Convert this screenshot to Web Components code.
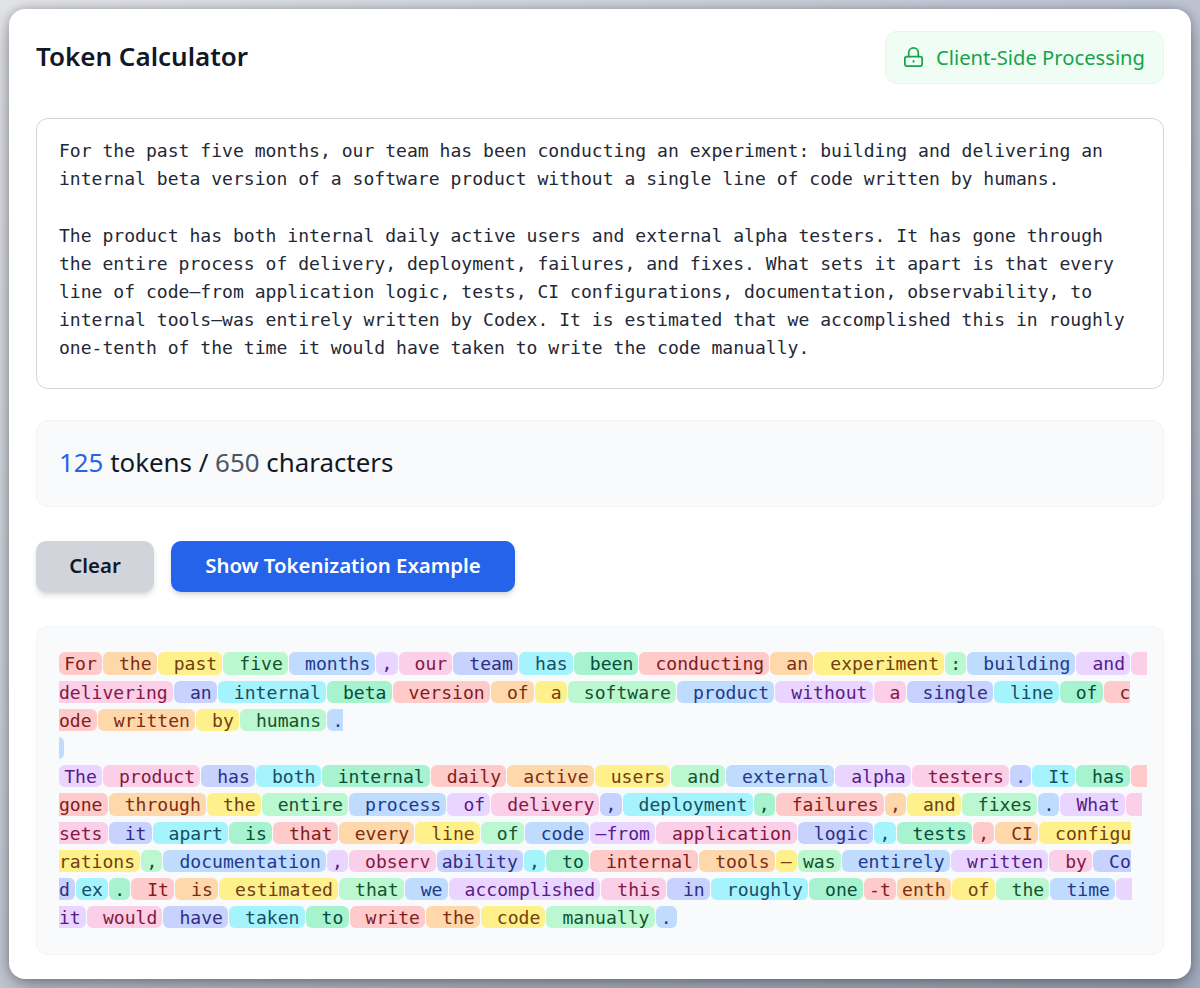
<!DOCTYPE html>
<html lang="en">
<head>
<meta charset="UTF-8">
<title>Token Calculator</title>
<style>
  html, body { margin: 0; height: 100%; }
  body {
    box-sizing: border-box;
    padding: 9px;
    overflow: hidden;
    font-family: "Noto Sans", sans-serif;
    background: linear-gradient(135deg, #e2e4e7 0%, #c0c6d4 50%, #a3aebf 100%);
  }
</style>
</head>
<body>
<calc-card>
  <calc-header slot="header">
    Token Calculator
    <status-pill slot="badge">Client-Side Processing</status-pill>
  </calc-header>
  <text-panel>For the past five months, our team has been conducting an experiment: building and delivering an internal beta version of a software product without a single line of code written by humans.

The product has both internal daily active users and external alpha testers. It has gone through the entire process of delivery, deployment, failures, and fixes. What sets it apart is that every line of code—from application logic, tests, CI configurations, documentation, observability, to internal tools—was entirely written by Codex. It is estimated that we accomplished this in roughly one-tenth of the time it would have taken to write the code manually.</text-panel>
  <stat-bar tokens="125" chars="650"></stat-bar>
  <button-row>
    <action-button kind="plain">Clear</action-button>
    <action-button kind="primary">Show Tokenization Example</action-button>
  </button-row>
  <token-view></token-view>
</calc-card>

<script>
  class CalcCard extends HTMLElement {
    constructor() {
      super();
      this.attachShadow({ mode: 'open' }).innerHTML = `
        <style>
          :host {
            display: flex;
            flex-direction: column;
            box-sizing: border-box;
            height: 970px;
            padding: 22px 27px 24px;
            background: #fff;
            border-radius: 16px;
            box-shadow: 0 10px 25px -3px rgba(0, 0, 0, .35), 0 0 10px rgba(0, 0, 0, .24);
            color: #111827;
          }
        </style>
        <slot name="header"></slot>
        <slot></slot>`;
    }
  }

  class CalcHeader extends HTMLElement {
    constructor() {
      super();
      this.attachShadow({ mode: 'open' }).innerHTML = `
        <style>
          :host {
            display: flex;
            justify-content: space-between;
            align-items: center;
            margin-bottom: 34px;
            font-size: 26px;
            font-weight: 600;
            color: #111827;
          }
          span { padding-bottom: 3px; }
        </style>
        <span><slot></slot></span>
        <slot name="badge"></slot>`;
    }
  }

  class StatusPill extends HTMLElement {
    constructor() {
      super();
      this.attachShadow({ mode: 'open' }).innerHTML = `
        <style>
          :host {
            display: flex;
            align-items: center;
            gap: 11px;
            box-sizing: border-box;
            height: 53px;
            padding: 0 18px 2px 16px;
            background: #f0fdf4;
            border: 1px solid #dcfce7;
            border-radius: 12px;
            font-size: 20.2px;
            font-weight: 400;
            color: #16a34a;
          }
          svg { width: 23px; height: 23px; flex: none; margin-top: 2px; }
        </style>
        <svg viewBox="0 0 24 24" fill="none" stroke="currentColor" stroke-width="1.8" stroke-linecap="round" stroke-linejoin="round">
          <rect x="3" y="11" width="18" height="10" rx="2"></rect>
          <path d="M7 11V7a5 5 0 0 1 10 0v4"></path>
          <path d="M12 15.5v1"></path>
        </svg>
        <slot></slot>`;
    }
  }

  class TextPanel extends HTMLElement {
    constructor() {
      super();
      this.attachShadow({ mode: 'open' }).innerHTML = `
        <style>
          :host {
            display: block;
            box-sizing: border-box;
            height: 271px;
            padding: 18px 22px 0;
            margin-bottom: 31px;
            border: 1px solid #d1d5db;
            border-radius: 12px;
            background: #fff;
          }
          div {
            font: 18.07px/28.2px "DejaVu Sans Mono", monospace;
            color: #1f2937;
            white-space: pre-wrap;
          }
        </style>
        <div><slot></slot></div>`;
    }
  }

  class StatBar extends HTMLElement {
    constructor() {
      super();
      this.attachShadow({ mode: 'open' }).innerHTML = `
        <style>
          :host {
            display: flex;
            align-items: center;
            box-sizing: border-box;
            height: 87px;
            padding: 0 22px 3px;
            margin-bottom: 34px;
            background: #f9fafb;
            border: 1px solid #f3f4f6;
            border-radius: 12px;
            font-size: 25.9px;
            color: #111827;
          }
          .tokens { color: #2563eb; }
          .chars { color: #4b5563; }
        </style>
        <span><span class="tokens"></span> tokens / <span class="chars"></span> characters</span>`;
      this.shadowRoot.querySelector('.tokens').textContent = this.getAttribute('tokens');
      this.shadowRoot.querySelector('.chars').textContent = this.getAttribute('chars');
    }
  }

  class ButtonRow extends HTMLElement {
    constructor() {
      super();
      this.attachShadow({ mode: 'open' }).innerHTML = `
        <style>
          :host { display: flex; gap: 17px; margin-bottom: 34px; }
        </style>
        <slot></slot>`;
    }
  }

  class ActionButton extends HTMLElement {
    constructor() {
      super();
      this.attachShadow({ mode: 'open' }).innerHTML = `
        <style>
          :host {
            display: flex;
            align-items: center;
            justify-content: center;
            box-sizing: border-box;
            height: 51px;
            padding-bottom: 3px;
            border-radius: 10px;
            font-size: 20.4px;
            font-weight: 600;
            box-shadow: 0 4px 6px -1px rgba(0, 0, 0, .14), 0 2px 4px -2px rgba(0, 0, 0, .1);
          }
          :host([kind="plain"]) { width: 118px; background: #d1d5db; color: #111827; }
          :host([kind="primary"]) { width: 344px; background: #2563eb; color: #fff; }
        </style>
        <slot></slot>`;
    }
  }

  // the colour of a token just cycles through the palette
  const TOKENS = ['For', ' the', ' past', ' five', ' months', ',', ' our', ' team', ' has', ' been',
    ' conducting', ' an', ' experiment', ':', ' building', ' and', ' delivering', ' an', ' internal', ' beta',
    ' version', ' of', ' a', ' software', ' product', ' without', ' a', ' single', ' line', ' of',
    ' code', ' written', ' by', ' humans', '.\n\n', 'The', ' product', ' has', ' both', ' internal',
    ' daily', ' active', ' users', ' and', ' external', ' alpha', ' testers', '.', ' It', ' has',
    ' gone', ' through', ' the', ' entire', ' process', ' of', ' delivery', ',', ' deployment', ',',
    ' failures', ',', ' and', ' fixes', '.', ' What', ' sets', ' it', ' apart', ' is',
    ' that', ' every', ' line', ' of', ' code', '—from', ' application', ' logic', ',', ' tests',
    ',', ' CI', ' configurations', ',', ' documentation', ',', ' observ', 'ability', ',', ' to',
    ' internal', ' tools', '—', 'was', ' entirely', ' written', ' by', ' Cod', 'ex', '.',
    ' It', ' is', ' estimated', ' that', ' we', ' accomplished', ' this', ' in', ' roughly', ' one',
    '-t', 'enth', ' of', ' the', ' time', ' it', ' would', ' have', ' taken', ' to',
    ' write', ' the', ' code', ' manually', '.'];

  const PALETTE = [
    ['#fecaca', '#7f1d1d'], ['#fed7aa', '#7c2d12'], ['#fef08a', '#713f12'], ['#bbf7d0', '#14532d'],
    ['#bfdbfe', '#1e3a8a'], ['#e9d5ff', '#581c87'], ['#fbcfe8', '#831843'], ['#c7d2fe', '#312e81'],
    ['#a5f3fc', '#164e63'], ['#a7f3d0', '#064e3b']
  ];

  class TokenView extends HTMLElement {
    constructor() {
      super();
      this.attachShadow({ mode: 'open' }).innerHTML = `
        <style>
          :host {
            display: block;
            box-sizing: border-box;
            height: 329px;
            padding: 23px 22px 0;
            background: #f9fafb;
            border: 1px solid #f3f4f6;
            border-radius: 12px;
          }
          #out {
            font: 18.07px/28.2px "DejaVu Sans Mono", monospace;
            white-space: pre-wrap;
            word-break: break-all;
          }
          span {
            padding: .6px 5.15px;
            margin-right: 1px;
            border-radius: 6px;
          }
        </style>
        <div id="out"></div>`;
      const out = this.shadowRoot.getElementById('out');
      TOKENS.forEach((t, i) => {
        const s = document.createElement('span');
        const c = PALETTE[i % PALETTE.length];
        s.textContent = t;
        s.style.background = c[0];
        s.style.color = c[1];
        out.appendChild(s);
      });
    }
  }

  customElements.define('calc-card', CalcCard);
  customElements.define('calc-header', CalcHeader);
  customElements.define('status-pill', StatusPill);
  customElements.define('text-panel', TextPanel);
  customElements.define('stat-bar', StatBar);
  customElements.define('button-row', ButtonRow);
  customElements.define('action-button', ActionButton);
  customElements.define('token-view', TokenView);
</script>
</body>
</html>
